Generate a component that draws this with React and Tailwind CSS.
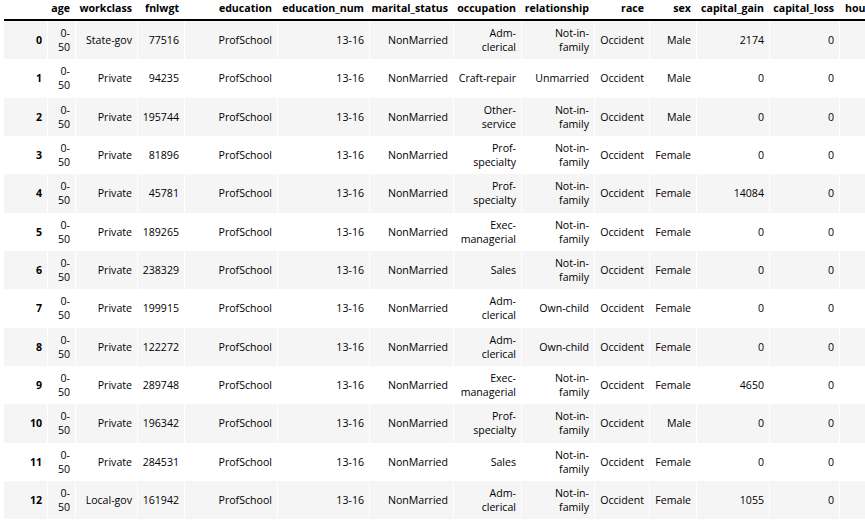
import React from "react";

const COLS = "grid-cols-[44px_28px_62px_47px_93px_92px_84px_68px_73px_55px_47px_73px_70px_140px]";

const headers = [
  "",
  "age",
  "workclass",
  "fnlwgt",
  "education",
  "education_num",
  "marital_status",
  "occupation",
  "relationship",
  "race",
  "sex",
  "capital_gain",
  "capital_loss",
];

const data = [
  ["State-gov", "77516", "Adm-clerical", "Not-in-family", "Male", "2174"],
  ["Private", "94235", "Craft-repair", "Unmarried", "Male", "0"],
  ["Private", "195744", "Other-service", "Not-in-family", "Male", "0"],
  ["Private", "81896", "Prof-specialty", "Not-in-family", "Female", "0"],
  ["Private", "45781", "Prof-specialty", "Not-in-family", "Female", "14084"],
  ["Private", "189265", "Exec-managerial", "Not-in-family", "Female", "0"],
  ["Private", "238329", "Sales", "Not-in-family", "Female", "0"],
  ["Private", "199915", "Adm-clerical", "Own-child", "Female", "0"],
  ["Private", "122272", "Adm-clerical", "Own-child", "Female", "0"],
  ["Private", "289748", "Exec-managerial", "Not-in-family", "Female", "4650"],
  ["Private", "196342", "Prof-specialty", "Not-in-family", "Male", "0"],
  ["Private", "284531", "Sales", "Not-in-family", "Female", "0"],
  ["Local-gov", "161942", "Adm-clerical", "Not-in-family", "Female", "1055"],
];

const NOWRAP = new Set(["Craft-repair", "Own-child"]);

function Wrapped({ value }) {
  const i = value.lastIndexOf("-");
  if (i < 0 || NOWRAP.has(value)) return <span>{value}</span>;
  return (
    <span className="flex flex-col items-end">
      <span>{value.slice(0, i + 1)}</span>
      <span>{value.slice(i + 1)}</span>
    </span>
  );
}

function Cell({ children, bold, last }) {
  return (
    <div
      className={`flex items-center justify-end whitespace-nowrap pl-[5px] pr-[5px] text-right text-black ${
        last ? "" : "border-r border-white"
      } ${bold ? "font-bold" : ""}`}
    >
      {children}
    </div>
  );
}

export default function App() {
  return (
    <div
      className="w-[865px] h-[520px] overflow-hidden bg-white text-[10.6px] leading-[14px]"
      style={{ fontFamily: "'Open Sans', 'Noto Sans', Arial, sans-serif" }}
    >
      <div className="ml-[4px] w-[960px]">
        <div className={`grid ${COLS} h-[21px] border-b-2 border-black`}>
          {headers.map((h, i) => (
            <div
              key={i}
              className="flex items-start justify-end pr-[6px] pt-[1px] font-bold text-black whitespace-nowrap"
            >
              {h}
            </div>
          ))}
          <div className="flex items-start justify-start overflow-hidden pl-[5px] pt-[1px] font-bold text-black whitespace-nowrap">
            hou
          </div>
        </div>
        {data.map((r, idx) => (
          <div
            key={idx}
            className={`grid ${COLS} h-[38.33px] ${idx % 2 === 0 ? "bg-[#f5f5f5]" : "bg-white"}`}
          >
            <Cell bold>{idx}</Cell>
            <Cell>
              <span className="flex flex-col items-end">
                <span>0-</span>
                <span>50</span>
              </span>
            </Cell>
            <Cell>{r[0]}</Cell>
            <Cell>{r[1]}</Cell>
            <Cell>ProfSchool</Cell>
            <Cell>13-16</Cell>
            <Cell>NonMarried</Cell>
            <Cell>
              <Wrapped value={r[2]} />
            </Cell>
            <Cell>
              <Wrapped value={r[3]} />
            </Cell>
            <Cell>Occident</Cell>
            <Cell>{r[4]}</Cell>
            <Cell>{r[5]}</Cell>
            <Cell>0</Cell>
            <Cell last>{""}</Cell>
          </div>
        ))}
      </div>
    </div>
  );
}
